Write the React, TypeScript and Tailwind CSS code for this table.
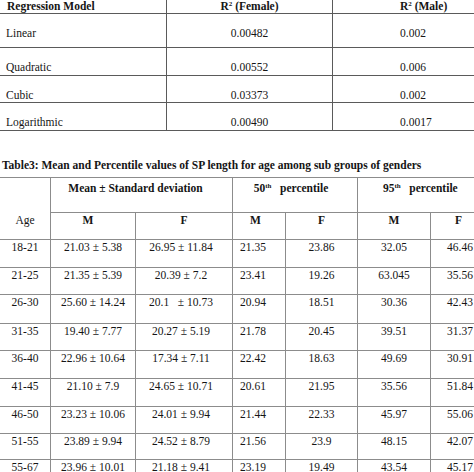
import React from "react";

type Row2 = [string, string, string, string, string, string, string];

const data: Row2[] = [
  ["18-21", "21.03 ± 5.38", "26.95 ± 11.84", "21.35", "23.86", "32.05", "46.46"],
  ["21-25", "21.35 ± 5.39", "20.39 ± 7.2", "23.41", "19.26", "63.045", "35.56"],
  ["26-30", "25.60 ± 14.24", "20.1\u00a0\u00a0\u00a0± 10.73", "20.94", "18.51", "30.36", "42.43"],
  ["31-35", "19.40 ± 7.77", "20.27 ± 5.19", "21.78", "20.45", "39.51", "31.37"],
  ["36-40", "22.96 ± 10.64", "17.34 ± 7.11", "22.42", "18.63", "49.69", "30.91"],
  ["41-45", "21.10 ± 7.9", "24.65 ± 10.71", "20.61", "21.95", "35.56", "51.84"],
  ["46-50", "23.23 ± 10.06", "24.01 ± 9.94", "21.44", "22.33", "45.97", "55.06"],
  ["51-55", "23.89 ± 9.94", "24.52 ± 8.79", "21.56", "23.9", "48.15", "42.07"],
  ["55-67", "23.96 ± 10.01", "21.18 ± 9.41", "23.19", "19.49", "43.54", "45.17"],
];

const rowHeights = ["h-[28px]", "h-[27px]", "h-[29px]", "h-[27px]", "h-[28px]", "h-[28px]", "h-[27px]", "h-[26px]", "h-[28px]"];

const colAlign = [
  "text-center",
  "text-center",
  "text-center pr-[6px]",
  "text-left pl-[7px]",
  "text-center",
  "text-center",
  "text-left pl-[16px]",
];

const b2 = "border-[#8c8c8c]";

function TopRow({ h, a, b, c }: { h: string; a: string; b: string; c: string }) {
  return (
    <div className={`flex ${h} border-b border-[#5a5a5a]`}>
      <div className="w-[167px] shrink-0 border-r border-[#5a5a5a] pl-[6px] pt-[12px]">{a}</div>
      <div className="w-[166px] shrink-0 border-r border-[#5a5a5a] pt-[12px] text-center">{b}</div>
      <div className="flex-1 pl-[67px] pt-[12px]">{c}</div>
    </div>
  );
}

function Sup({ children }: { children: React.ReactNode }) {
  return <span className="text-[7px] align-[4px] leading-none">{children}</span>;
}

export default function App() {
  return (
    <div className="w-[474px] h-[472px] overflow-hidden bg-white text-[#151515] [font-family:'Liberation_Serif','Times_New_Roman',serif] text-[11.5px] leading-[14px]">
      <div className="w-[520px]">
        {/* Top table */}
        <div className="flex flex-col">
          <div className="flex h-[14px] border-b border-[#5a5a5a] font-bold leading-[13px]">
            <div className="w-[167px] shrink-0 border-r border-[#5a5a5a] pl-[7px]">Regression Model</div>
            <div className="w-[166px] shrink-0 border-r border-[#5a5a5a] text-center">
              R<Sup>2</Sup> (Female)
            </div>
            <div className="flex-1 pl-[67px]">
              R<Sup>2</Sup> (Male)
            </div>
          </div>
          <TopRow h="h-[34px]" a="Linear" b="0.00482" c="0.002" />
          <TopRow h="h-[28px]" a="Quadratic" b="0.00552" c="0.006" />
          <TopRow h="h-[27px]" a="Cubic" b="0.03373" c="0.002" />
          <TopRow h="h-[28px]" a="Logarithmic" b="0.00490" c="0.0017" />
        </div>

        {/* Title */}
        <div className="mt-[27px] pl-[2px] font-bold">
          Table3: Mean and Percentile values of SP length for age among sub groups of genders
        </div>

        {/* Second table */}
        <div className={`mt-[5px] border-t ${b2}`}>
          <div className="grid grid-cols-[51px_182px_125px_142px] h-[35px] font-bold">
            <div className={`border-r ${b2}`}></div>
            <div className={`border-r border-b ${b2} text-center pr-[12px] pt-[3px]`}>Mean ± Standard deviation</div>
            <div className={`border-r border-b ${b2} text-center pr-[8px] pt-[3px]`}>
              50<Sup>th</Sup>&nbsp;&nbsp; percentile
            </div>
            <div className={`border-b ${b2} text-left pl-[25px] pt-[3px]`}>
              95<Sup>th</Sup>&nbsp;&nbsp; percentile
            </div>
          </div>
          <div className="grid grid-cols-[51px_85px_97px_53px_72px_73px_69px] h-[27px]">
            <div className={`border-r border-b ${b2} text-center`}>Age</div>
            <div className={`border-r border-b ${b2} text-center pr-[10px] font-bold`}>M</div>
            <div className={`border-r border-b ${b2} text-center font-bold`}>F</div>
            <div className={`border-r border-b ${b2} text-left pl-[17px] font-bold`}>M</div>
            <div className={`border-r border-b ${b2} text-center font-bold`}>F</div>
            <div className={`border-r border-b ${b2} text-center font-bold`}>M</div>
            <div className={`border-b ${b2} text-left pl-[24px] font-bold`}>F</div>
          </div>
          {data.map((row, i) => (
            <div key={i} className={`grid grid-cols-[51px_85px_97px_53px_72px_73px_69px] ${rowHeights[i]}`}>
              {row.map((cell, j) => (
                <div
                  key={j}
                  className={`${j < 6 ? "border-r" : ""} border-b ${b2} ${colAlign[j]} whitespace-pre`}
                >
                  {cell}
                </div>
              ))}
            </div>
          ))}
        </div>
      </div>
    </div>
  );
}
